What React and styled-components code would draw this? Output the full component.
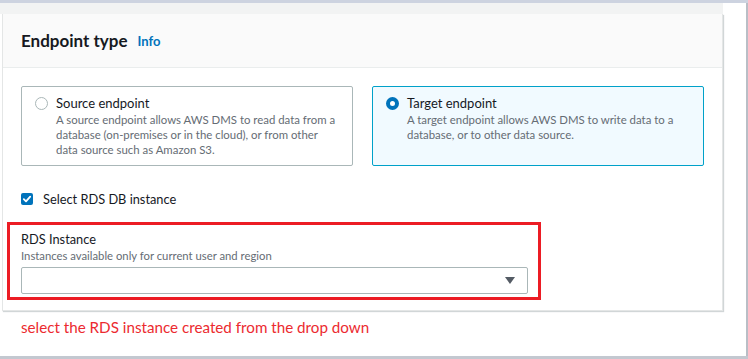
import styled, { createGlobalStyle } from 'styled-components'

const GlobalStyle = createGlobalStyle`
  html, body {
    margin: 0;
    padding: 0;
    background: #ffffff;
    font-family: Lato, "Open Sans", sans-serif;
    color: #16191f;
  }
`

function RadioTile ({ checked, title, children }) {
  return (
    <Tile checked={checked}>
      <Radio checked={checked} />
      <TileText>
        <TileTitle>{title}</TileTitle>
        <TileDesc>{children}</TileDesc>
      </TileText>
    </Tile>
  )
}

export default function App () {
  return (
    <>
      <GlobalStyle />
      <Screen>
        <TopStrip />
        <Frame>
          <Main>
            <Backdrop />
            <Card>
              <CardHeader>
                <Title>Endpoint type</Title>
                <InfoLink>Info</InfoLink>
              </CardHeader>
              <CardBody>
                <Tiles>
                  <RadioTile title='Source endpoint'>
                    A source endpoint allows AWS DMS to read data from a database (on-premises or in the cloud), or from other data source such as Amazon S3.
                  </RadioTile>
                  <RadioTile checked title='Target endpoint'>
                    A target endpoint allows AWS DMS to write data to a database, or to other data source.
                  </RadioTile>
                </Tiles>
                <CheckRow>
                  <CheckBox>
                    <svg width='10' height='10' viewBox='0 0 10 10'>
                      <path d='M1.8 5.2 L4 7.4 L8.2 2.6' fill='none' stroke='#fff' strokeWidth='1.8' strokeLinecap='round' strokeLinejoin='round' />
                    </svg>
                  </CheckBox>
                  <CheckLabel>Select RDS DB instance</CheckLabel>
                </CheckRow>
                <Highlight>
                  <FieldLabel>RDS Instance</FieldLabel>
                  <FieldHint>Instances available only for current user and region</FieldHint>
                  <Select>
                    <Caret />
                  </Select>
                </Highlight>
              </CardBody>
            </Card>
            <Note>select the RDS instance created from the drop down</Note>
          </Main>
          <EdgeLine />
        </Frame>
        <BottomLine />
      </Screen>
    </>
  )
}

const Screen = styled.div`
  width: 748px;
  height: 359px;
  display: flex;
  flex-direction: column;
  overflow: hidden;
  background: #fff;
`

const TopStrip = styled.div`
  height: 3px;
  background: #cdd3e0;
  flex: none;
`

const Frame = styled.div`
  flex: 1;
  display: flex;
`

const Main = styled.div`
  width: 746px;
  display: flex;
  flex-direction: column;
`

const Backdrop = styled.div`
  height: 11px;
  width: 723px;
  background: #f2f3f3;
`

const EdgeLine = styled.div`
  width: 2px;
  background: #b9bec6;
`

const BottomLine = styled.div`
  height: 3px;
  background: #c3c8d0;
  flex: none;
`

const Card = styled.section`
  margin-left: 2px;
  width: 719px;
  height: 296px;
  border: 1px solid #e4e6e6;
  border-top: none;
  box-shadow: 1px 1px 1px rgba(0, 28, 36, 0.18);
  background: #fff;
  display: flex;
  flex-direction: column;
`

const CardHeader = styled.header`
  height: 54px;
  flex: none;
  background: #fafafa;
  border-bottom: 1px solid #eaeded;
  display: flex;
  align-items: center;
  gap: 10px;
  padding: 0 0 1px 18px;
  box-sizing: border-box;
`

const Title = styled.h2`
  margin: 0;
  font-size: 17px;
  font-weight: 700;
  color: #16191f;
`

const InfoLink = styled.a`
  font-size: 13px;
  font-weight: 700;
  color: #0073bb;
  margin-top: 1px;
`

const CardBody = styled.div`
  padding: 18px 0 0 0;
  display: flex;
  flex-direction: column;
`

const Tiles = styled.div`
  display: flex;
  gap: 19px;
  padding-left: 18px;
`

const Tile = styled.div`
  width: 332px;
  height: 80px;
  box-sizing: border-box;
  border: 1px solid ${p => (p.checked ? '#00a1c9' : '#aab7b8')};
  background: ${p => (p.checked ? '#f1faff' : '#fff')};
  border-radius: 2px;
  display: flex;
  gap: 8px;
  padding: 7px 12px 0 13px;
`

const Radio = styled.span`
  flex: none;
  width: 13px;
  height: 13px;
  margin-top: 3px;
  box-sizing: border-box;
  border-radius: 50%;
  border: ${p => (p.checked ? '4px solid #0073bb' : '1px solid #aab7b8')};
  background: #fff;
`

const TileText = styled.div`
  display: flex;
  flex-direction: column;
`

const TileTitle = styled.div`
  font-size: 13px;
  line-height: 18px;
  color: #16191f;
`

const TileDesc = styled.div`
  font-size: 11.4px;
  line-height: 15px;
  color: #656c74;
  margin-top: 0;
`

const CheckRow = styled.div`
  display: flex;
  align-items: center;
  gap: 10px;
  padding-left: 18px;
  margin-top: 25px;
`

const CheckBox = styled.span`
  width: 12px;
  height: 12px;
  border-radius: 2px;
  background: #0073bb;
  display: flex;
  align-items: center;
  justify-content: center;
`

const CheckLabel = styled.span`
  font-size: 12.8px;
  color: #16191f;
`

const Highlight = styled.div`
  margin: 15px 0 0 4px;
  width: 534px;
  height: 78px;
  box-sizing: border-box;
  border: 3px solid #ec1c24;
  padding: 5px 10px 0 11px;
  display: flex;
  flex-direction: column;
`

const FieldLabel = styled.div`
  font-size: 12.8px;
  line-height: 18px;
  color: #16191f;
`

const FieldHint = styled.div`
  font-size: 11.3px;
  line-height: 15px;
  color: #656c74;
`

const Select = styled.div`
  margin-top: 4px;
  height: 27px;
  width: 507px;
  box-sizing: border-box;
  border: 1px solid #aab7b8;
  border-radius: 2px;
  display: flex;
  align-items: center;
  justify-content: flex-end;
  padding-right: 12px;
`

const Caret = styled.span`
  width: 0;
  height: 0;
  border-left: 5px solid transparent;
  border-right: 5px solid transparent;
  border-top: 7px solid #545b64;
`

const Note = styled.p`
  margin: 7px 0 0 21px;
  font-size: 15.2px;
  color: #ec2a30;
`
